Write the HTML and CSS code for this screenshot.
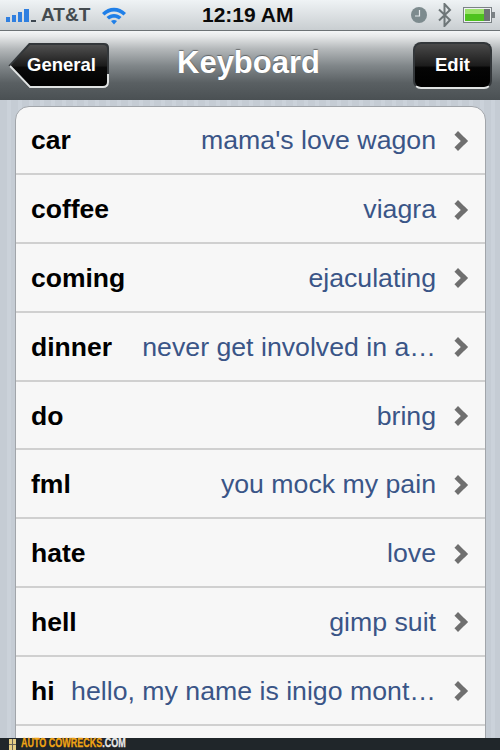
FILE: index.html
```html
<!DOCTYPE html>
<html lang="en">
<head>
    <meta charset="UTF-8" />
    <title>Keyboard</title>
    <link rel="stylesheet" href="styles.css">
</head>
<body>

<div class="status-bar">
    <div class="status-left">
        <svg class="signal" width="31" height="14" viewBox="0 0 31 14">
            <rect x="0" y="9" width="4" height="5" fill="#2f7fe0"/>
            <rect x="6" y="7" width="4" height="7" fill="#2f7fe0"/>
            <rect x="12" y="4" width="4" height="10" fill="#2f7fe0"/>
            <rect x="18" y="1" width="5" height="13" fill="#2f7fe0"/>
            <rect x="25" y="12" width="5" height="2" fill="#3c4650"/>
        </svg>
        <span class="carrier">AT&amp;T</span>
        <svg class="wifi" width="26" height="19" viewBox="0 0 26 19">
            <path d="M1 7 C8 0 18 0 25 7 L22.500 9.500 C16.500 4 9.500 4 3.500 9.500 Z" fill="#1f7fe8"/>
            <path d="M5.500 11 C10 7 16 7 20.500 11 L18 13.500 C15 11 11 11 8 13.500 Z" fill="#1f7fe8"/>
            <path d="M10 15 C12 13.500 14 13.500 16 15 L13 18.500 Z" fill="#1f7fe8"/>
        </svg>
    </div>
    <span class="clock">12:19 AM</span>
    <div class="status-right">
        <svg width="16" height="16" viewBox="0 0 16 16">
            <circle cx="8" cy="8" r="8" fill="#7d8b8e"/>
            <path d="M8.500 3 V9 H4" fill="none" stroke="#e4e9ec" stroke-width="1.200"/>
        </svg>
        <svg class="bt" width="14" height="24" viewBox="0 0 14 24">
            <path d="M1 6.500 L12 17 L6.500 23 V1 L12 7 L1 17.500" fill="none" stroke="#6e7678" stroke-width="2"/>
        </svg>
        <svg width="32" height="16" viewBox="0 0 32 16">
            <rect x="0.500" y="0.500" width="28" height="15" fill="#eef1f3" stroke="#7b8285"/>
            <rect x="2" y="2" width="19" height="12" fill="#4fc21f"/>
            <rect x="2" y="2" width="19" height="5" fill="#9be36a"/>
            <rect x="21" y="2" width="6" height="12" fill="#6d7274"/>
            <rect x="29" y="5" width="3" height="6" fill="#7b8285"/>
        </svg>
    </div>
</div>

<div class="nav-bar">
    <div class="back-wrap">
        <svg class="back-shape" width="103" height="47" viewBox="0 0 103 47">
            <defs>
                <linearGradient id="backFill" x1="0" y1="0" x2="0" y2="1">
                    <stop offset="0" stop-color="#505050"/>
                    <stop offset="0.5" stop-color="#1c1c1c"/>
                    <stop offset="0.55" stop-color="#0a0a0a"/>
                    <stop offset="1" stop-color="#000"/>
                </linearGradient>
            </defs>
            <path d="M1.500 23.500 L22 1 H97 Q102 1 102 6 V41 Q102 46 97 46 H22 Z" fill="#33373a"/>
            <path d="M4 23.500 L23 3 H96 Q100 3 100 7 V40 Q100 44 96 44 H23 Z" fill="url(#backFill)"/>
            <path d="M3 24 L23 45 H96 Q101 45 101 40 V32" fill="none" stroke="#dfe2e2" stroke-width="2"/>
        </svg>
        <span class="back-label">General</span>
    </div>
    <h1 class="nav-title">Keyboard</h1>
    <button class="edit-btn">Edit</button>
</div>

<div class="content">
    <ul class="shortcut-list">
        <li class="row"><span class="key">car</span><span class="value">mama's love wagon</span><i class="chevron"></i></li>
        <li class="row"><span class="key">coffee</span><span class="value">viagra</span><i class="chevron"></i></li>
        <li class="row"><span class="key">coming</span><span class="value">ejaculating</span><i class="chevron"></i></li>
        <li class="row"><span class="key">dinner</span><span class="value">never get involved in a…</span><i class="chevron"></i></li>
        <li class="row"><span class="key">do</span><span class="value">bring</span><i class="chevron"></i></li>
        <li class="row"><span class="key">fml</span><span class="value">you mock my pain</span><i class="chevron"></i></li>
        <li class="row"><span class="key">hate</span><span class="value">love</span><i class="chevron"></i></li>
        <li class="row"><span class="key">hell</span><span class="value">gimp suit</span><i class="chevron"></i></li>
        <li class="row"><span class="key">hi</span><span class="value">hello, my name is inigo mont…</span><i class="chevron"></i></li>
        <li class="row"></li>
    </ul>
</div>

<div class="footer">
    <svg width="8" height="12" viewBox="0 0 8 12">
        <rect x="0" y="1" width="7" height="11" fill="#e6cf86"/>
        <rect x="0" y="6" width="7" height="1" fill="#6a6458"/>
        <rect x="3" y="1" width="1" height="11" fill="#6a6458"/>
    </svg>
    <span class="footer-text"><span class="footer-brand">AUTO COWRECKS</span><span class="footer-com">.COM</span></span>
</div>

</body>
</html>
```

FILE: styles.css
```css
* {
    box-sizing: border-box;
    margin: 0;
    padding: 0;
}

body {
    font-family: 'Liberation Sans', Arial, sans-serif;
    width: 500px;
    height: 750px;
    overflow: hidden;
    display: flex;
    flex-direction: column;
    background: #c5ccd4;
}

/* Status bar */
.status-bar {
    height: 31px;
    flex: none;
    position: relative;
    display: flex;
    justify-content: space-between;
    align-items: center;
    padding: 0 5px 0 6px;
    background: linear-gradient(#eff3f5, #c9ced1);
    border-bottom: 1px solid #6c7275;
}

.status-left {
    display: flex;
    align-items: center;
}

.signal {
    margin-right: 4px;
}

.carrier {
    font-size: 19px;
    font-weight: bold;
    color: #444b4f;
    margin-right: 11px;
}

.clock {
    position: absolute;
    left: 202px;
    top: 2px;
    font-size: 21px;
    line-height: 26px;
    font-weight: bold;
    color: #0a0a0a;
}

.status-right {
    display: flex;
    align-items: center;
    gap: 11px;
}

/* Nav bar */
.nav-bar {
    height: 69px;
    flex: none;
    display: flex;
    align-items: center;
    justify-content: space-between;
    padding: 0 8px 1px 7px;
    position: relative;
    background: linear-gradient(#f4f6f7 0%, #e6e8e9 8%, #b4b8ba 26%, #81878a 50%, #5a6063 75%, #4a5053 100%);
}

.back-wrap {
    position: relative;
    width: 103px;
    height: 47px;
}

.back-shape {
    display: block;
}

.back-label {
    position: absolute;
    left: 20px;
    top: 11px;
    font-size: 18.500px;
    line-height: 24px;
    font-weight: bold;
    color: #fff;
}

.nav-title {
    position: absolute;
    left: 177px;
    top: 13px;
    font-size: 31px;
    line-height: 38px;
    font-weight: bold;
    color: #fff;
    text-shadow: 0 -1px 1px rgba(0, 0, 0, 0.4);
}

.edit-btn {
    width: 79px;
    height: 47px;
    font-family: inherit;
    font-size: 18.500px;
    font-weight: bold;
    color: #fff;
    background: linear-gradient(#4a4a4a, #1c1c1c 50%, #050505 55%, #000);
    border: 2px solid #33373a;
    border-bottom-color: #dfe2e2;
    border-radius: 8px;
}

/* Table */
.content {
    flex: 1;
    min-height: 0;
    overflow: hidden;
    padding: 5.500px 14px 0 15px;
    background: repeating-linear-gradient(90deg, #c5ccd4 0, #c5ccd4 7px, #cbd2da 7px, #cbd2da 11px);
}

.shortcut-list {
    list-style: none;
    background: #f7f7f7;
    border: 1px solid #a1a5aa;
    border-radius: 14px;
    overflow: hidden;
}

.row {
    height: 68.800px;
    display: flex;
    align-items: center;
    justify-content: space-between;
    padding: 2px 16px 0 15px;
    border-bottom: 2px solid #d0d0d0;
}

.key {
    font-size: 26.500px;
    font-weight: bold;
    color: #000;
    flex: none;
}

.value {
    flex: 1;
    text-align: right;
    font-size: 26.700px;
    color: #3a5587;
    white-space: nowrap;
    margin-left: 10px;
    margin-right: 15px;
}

.chevron {
    width: 14px;
    height: 14px;
    flex: none;
    margin-right: 4px;
    border-top: 5px solid #6f6f6f;
    border-right: 5px solid #6f6f6f;
    transform: rotate(45deg);
}

/* Footer strip */
.footer {
    height: 12px;
    flex: none;
    display: flex;
    align-items: center;
    padding-left: 9px;
    background: #20262a;
}

.footer svg {
    flex: none;
    margin-right: 4px;
}

.footer-text {
    align-self: flex-end;
    font-size: 12.500px;
    font-weight: bold;
    white-space: nowrap;
    -webkit-text-stroke: 0.300px;
    transform: scaleX(0.720);
    transform-origin: left center;
}

.footer-brand {
    color: #f0a414;
}

.footer-com {
    color: #e8e8e8;
}
```
